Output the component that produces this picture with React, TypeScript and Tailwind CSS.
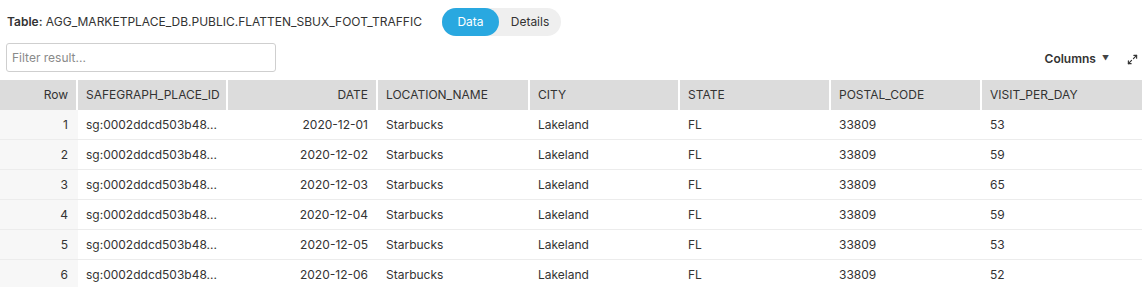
import { Maximize2 } from "lucide-react";

const columns = [
  { key: "row", label: "Row", width: "w-[78px]", align: "right" },
  { key: "id", label: "SAFEGRAPH_PLACE_ID", width: "w-[150px]", align: "left" },
  { key: "date", label: "DATE", width: "w-[150px]", align: "right" },
  { key: "loc", label: "LOCATION_NAME", width: "w-[152px]", align: "left" },
  { key: "city", label: "CITY", width: "w-[150px]", align: "left" },
  { key: "state", label: "STATE", width: "w-[151px]", align: "left" },
  { key: "postal", label: "POSTAL_CODE", width: "w-[151px]", align: "left" },
  { key: "visits", label: "VISIT_PER_DAY", width: "flex-1", align: "left" }
];

const visits = [53, 59, 65, 59, 53, 52];

const rows = visits.map((v, i) => ({
  row: String(i + 1),
  id: "sg:0002ddcd503b48...",
  date: `2020-12-0${i + 1}`,
  loc: "Starbucks",
  city: "Lakeland",
  state: "FL",
  postal: "33809",
  visits: String(v)
}));

export default function App() {
  return (
    <div className="h-[287px] w-[1142px] overflow-hidden bg-white text-[12px] text-[#333] [font-family:Inter,'Noto_Sans',sans-serif]">
      <div className="flex h-[43px] items-center pl-[7px]">
        <div className="w-[435px] text-[12px] text-[#333]">
          <span className="font-semibold">Table:</span> AGG_MARKETPLACE_DB.PUBLIC.FLATTEN_SBUX_FOOT_TRAFFIC
        </div>
        <div className="flex h-[28px] items-center rounded-full bg-[#efefef] text-[12px]">
          <button className="h-[28px] w-[57px] rounded-full bg-[#29a8e0] text-white">Data</button>
          <button className="h-[28px] w-[62px] text-[#333]">Details</button>
        </div>
      </div>
      <div className="flex h-[37px] items-start justify-between pl-[6px] pr-[4px]">
        <input
          className="h-[29px] w-[270px] rounded-[3px] border border-[#cfcfcf] px-[5px] text-[12px] text-[#333] placeholder:text-[#8a8a8a] outline-none"
          placeholder="Filter result..."
        />
        <div className="flex h-[32px] items-center">
          <span className="font-semibold text-[#333]">Columns</span>
          <span className="ml-[6px] text-[7px] text-[#444]">▼</span>
          <Maximize2 className="ml-[18px] h-[11px] w-[11px] text-[#333]" strokeWidth={2.5} />
        </div>
      </div>
      <div className="flex h-[30px] bg-[#dcdcdc]">
        {columns.map((c, i) => (
          <div
            key={c.key}
            className={`${c.width} flex items-center px-[8px] ${c.align === "right" ? "justify-end" : ""} ${i < columns.length - 1 ? "border-r-2 border-white" : ""}`}
          >
            {c.label}
          </div>
        ))}
      </div>
      {rows.map((r) => (
        <div key={r.row} className="flex h-[30px] border-b border-[#ececec]">
          {columns.map((c) => (
            <div
              key={c.key}
              className={`${c.width} flex items-center px-[8px] ${c.align === "right" ? "justify-end" : ""} ${c.key === "row" ? "bg-[#f7f7f7] border-r-2 border-[#f7f7f7]" : "border-r-2 border-transparent"}`}
            >
              {r[c.key as keyof typeof r]}
            </div>
          ))}
        </div>
      ))}
    </div>
  );
}
